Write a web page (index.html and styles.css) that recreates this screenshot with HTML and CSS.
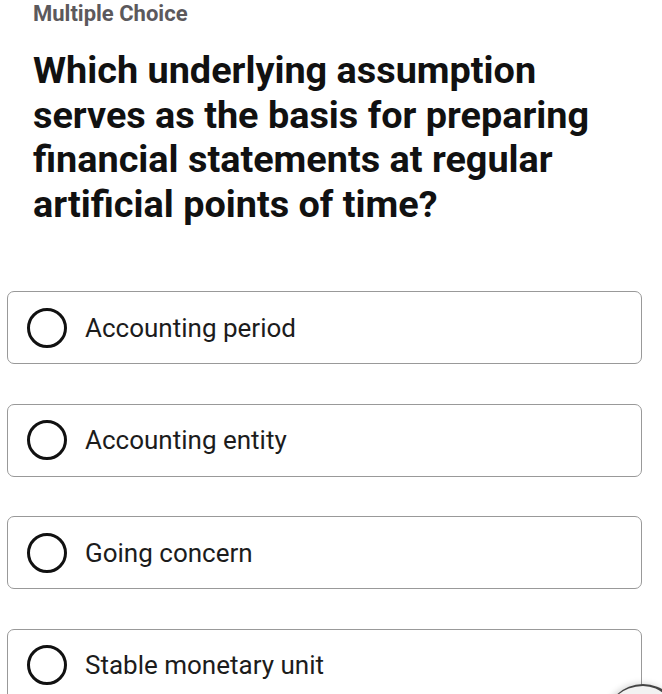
FILE: index.html
```html
<!DOCTYPE html>
<html>
<head>
<meta charset="utf-8">
<link rel="stylesheet" href="styles.css">
</head>
<body>
<div class="page">
  <div class="label">Multiple Choice</div>
  <h1 class="question">Which underlying assumption serves as the basis for preparing financial statements at regular artificial points of time?</h1>
  <div class="options">
    <div class="option"><span class="radio"></span><span class="text">Accounting period</span></div>
    <div class="option"><span class="radio"></span><span class="text">Accounting entity</span></div>
    <div class="option"><span class="radio"></span><span class="text">Going concern</span></div>
    <div class="option"><span class="radio"></span><span class="text">Stable monetary unit</span></div>
  </div>
  <div class="fab"></div>
</div>
</body>
</html>
```
FILE: styles.css
```css
html, body { margin: 0; padding: 0; background: #fff; }
body { font-family: Roboto, "Liberation Sans", sans-serif; overflow: hidden; height: 694px; }
.page { position: relative; padding: 1px 20px 0 7px; }
.label { margin-left: 26px; font-size: 22px; font-weight: 700; color: #5c595c; line-height: 26px; }
.question { margin: 21px 0 0 26px; font-size: 37.8px; font-weight: 700; color: #111; line-height: 44.5px; width: 590px; }
.options { margin-top: 65px; display: flex; flex-direction: column; gap: 39.5px; }
.option { box-sizing: border-box; display: flex; align-items: center; height: 73px; border: 1.5px solid #999; border-radius: 7px; padding-left: 19px; gap: 18px; }
.radio { box-sizing: border-box; width: 40px; height: 40px; border: 3.5px solid #111; border-radius: 50%; flex: none; }
.text { font-size: 26px; color: #1c1c1c; }
.fab { position: absolute; left: 606px; top: 684px; width: 70px; height: 70px; border-radius: 50%; border-right: 4px solid #111; border-top: 2px solid #444; background: #f2f2f2; box-shadow: -2px -1px 6px rgba(0,0,0,.15); }
```
